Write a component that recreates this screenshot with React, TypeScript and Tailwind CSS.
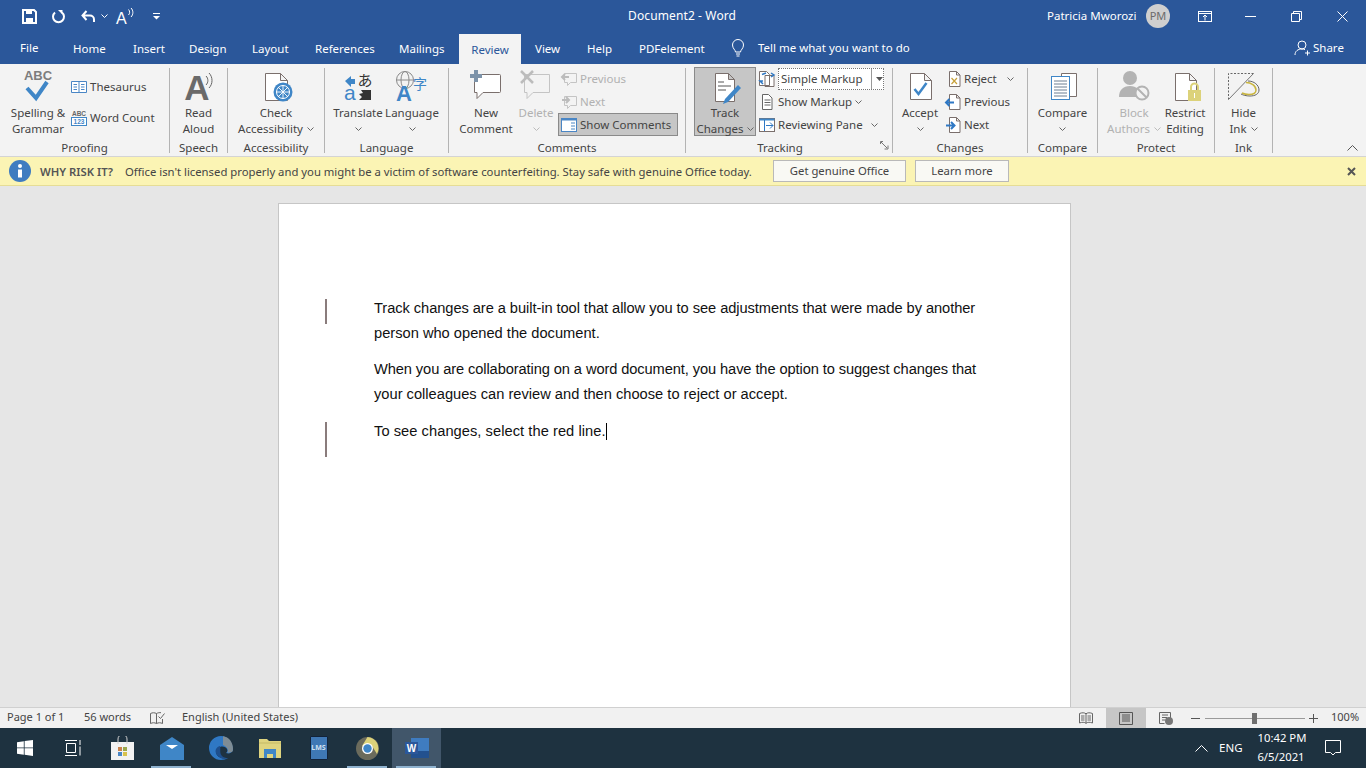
import React from "react";

const Chev = ({ c = "#666" }: { c?: string }) => (
  <svg width="7" height="4" viewBox="0 0 7 4" className="inline-block shrink-0"><path d="M.5.5 3.5 3.5 6.5.5" fill="none" stroke={c} /></svg>
);

const I = ({ children, w = 40 }: { children: React.ReactNode; w?: number }) => (
  <svg width={w} height="38" viewBox={`0 0 ${w} 38`} className="shrink-0 overflow-visible">{children}</svg>
);

const page = (x: number, y: number, w: number, h: number, s = "#7a6f6c") => (
  <path d={`M${x + .5} ${y + .5}h${w - 7}l7 7v${h - 7}h-${w}z M${x + w - 7 + .5} ${y + .5}v7h7`} fill="#fff" stroke={s} />
);

const Big = ({ icon, lines, w, chev, off, last }: { icon: React.ReactNode; lines: string[]; w: number; chev?: boolean; off?: boolean; last?: boolean }) => (
  <div className={`flex flex-col items-center shrink-0 ${off ? "text-[#b1b1b1]" : "text-[#444]"}`} style={{ width: w }}>
    <div className="h-[38px] flex justify-center">{icon}</div>
    {lines.map((l, i) => (
      <div key={l} className="h-[16px] leading-[16px] whitespace-nowrap flex items-center gap-[4px]">
        {l}
        {chev && !last && i === lines.length - 1 ? <Chev c={off ? "#bbb" : "#666"} /> : null}
      </div>
    ))}
    {last ? <div className="h-[16px] flex items-center"><Chev c={off ? "#bbb" : "#666"} /></div> : null}
  </div>
);

const Row = ({ icon, text, off, chev, gap = 3 }: { icon: React.ReactNode; text: string; off?: boolean; chev?: number; gap?: number }) => (
  <div className={`h-[23px] flex items-center whitespace-nowrap pl-[3px] ${off ? "text-[#b1b1b1]" : "text-[#444]"}`}>
    <div className="w-[16px] h-[16px] flex items-center justify-center shrink-0" style={{ marginRight: gap }}>{icon}</div>
    {text}
    {chev !== undefined ? <span className="flex" style={{ marginLeft: chev }}><Chev /></span> : null}
  </div>
);

const Sep = () => <div className="w-px h-[85px] mt-[4px] bg-[#b3b3b3] shrink-0" />;

const Group = ({ w, label, children, cls = "", labelCls = "" }: { w: number; label: string; children: React.ReactNode; cls?: string; labelCls?: string }) => (
  <div className="flex flex-col shrink-0" style={{ width: w }}>
    <div className={`h-[73px] mt-[3px] flex ${cls}`}>{children}</div>
    <div className={`h-[16px] leading-[16px] text-center text-[#444] whitespace-nowrap ${labelCls}`}>{label}</div>
  </div>
);

const S16 = ({ children }: { children: React.ReactNode }) => <svg width="16" height="16" viewBox="0 0 16 16" className="overflow-visible">{children}</svg>;

const Bubble = ({ c, arrow, dir }: { c: string; arrow: string; dir: number }) => (
  <S16>
    <path d="M3.5 2.5h12v9h-6l-3 3v-3h-3z" fill="#f3f3f3" stroke={c} />
    <path d={dir > 0 ? "M1 6h7M5 3l3 3-3 3" : "M8 6H1M4 3 1 6l3 3"} fill="none" stroke={arrow} strokeWidth="2" />
  </S16>
);

const PageArrow = ({ dir }: { dir: number }) => (
  <S16>
    <path d="M3.500.5h7l3.500 3.500v11.500h-10.500zM10.500.5v3.500h3.500" fill="#fff" stroke="#7a6f6c" />
    <path d={dir > 0 ? "M0 8.500h8M5 5l3.500 3.500L5 12" : "M8 8.500H0M3.500 5 0 8.500 3.500 12"} fill="none" stroke="#2f78c4" strokeWidth="2" />
  </S16>
);

const TabItem = ({ t, w, top = true }: { t: string; w: number; top?: boolean }) => (
  <div className={`shrink-0 whitespace-nowrap text-white ${top ? "pt-[2px]" : ""}`} style={{ width: w }}>{t}</div>
);

const Slot = ({ children, bar, active }: { children: React.ReactNode; bar?: boolean; active?: boolean }) => (
  <div className={`relative w-[49px] h-[40px] flex items-center justify-center shrink-0 ${active ? "bg-[#41566a]" : ""}`}>
    {children}
    {bar ? <div className="absolute bottom-0 left-[4px] right-[5px] h-[2px] bg-[#8fb2cf]" /> : null}
  </div>
);

export default function App() {
  return (
    <div className="w-[1366px] h-[768px] overflow-hidden flex flex-col font-['Noto_Sans',sans-serif] text-[11.5px] bg-[#e6e6e6]">
      {/* Title bar */}
      <div className="h-[32px] bg-[#2b579a] flex items-center text-white shrink-0">
        <div className="flex items-center pl-[22px] w-[200px] shrink-0">
          <svg width="15" height="15" viewBox="0 0 15 15" className="mr-[14px]"><path d="M1 1h11l2 2v11H1z" fill="none" stroke="#fff" strokeWidth="2" /><rect x="4" y="1" width="6" height="4" fill="#fff" /><rect x="4" y="9" width="7" height="5" fill="#fff" /></svg>
          <svg width="15" height="15" viewBox="0 0 15 15" className="mr-[15px]"><path d="M4 3.500a5.500 5.500 0 1 0 7 0" fill="none" stroke="#fff" strokeWidth="2" /><path d="M3 1h4.500v4.500z" fill="#fff" transform="translate(4 0)" /></svg>
          <svg width="15" height="13" viewBox="0 0 15 13" className="mr-[5px]"><path d="M1.500 5.500H9a4 4 0 0 1 4 4v2.500M5.500 1 1.500 5.500 5.500 10" fill="none" stroke="#fff" strokeWidth="2" /></svg>
          <Chev c="#fff" />
          <svg width="20" height="17" viewBox="0 0 20 17" className="ml-[8px] overflow-visible"><text x="0" y="16" fontSize="16" fill="#fff" fontFamily="'Liberation Sans',sans-serif">A</text><path d="M12.500 1.500c1.500 1.500 1.500 4 0 5.500M15 0c2.500 2.500 2.500 6.500 0 9" fill="none" stroke="#fff" /></svg>
          <svg width="7" height="7" viewBox="0 0 7 7" className="ml-[17px]"><path d="M0 .5h7" stroke="#fff" /><path d="M0 3h7L3.500 6.500z" fill="#fff" /></svg>
        </div>
        <div className="ml-[428px] w-[200px] text-[12px] whitespace-nowrap tracking-[0.12px]">Document2 - Word</div>
        <div className="ml-[219px] w-[99px] whitespace-nowrap text-[11.5px]">Patricia Mworozi</div>
        <div className="w-[24px] h-[24px] rounded-full bg-[#cfcfcf] text-[#6b6b6b] text-[11px] flex items-center justify-center shrink-0">PM</div>
        <svg width="14" height="11" viewBox="0 0 14 11" className="ml-[28px]"><rect x=".5" y=".5" width="13" height="10" fill="none" stroke="#fff" /><path d="M.5 2.500h13M7 9.500V4.500M5 6l2-2 2 2" fill="none" stroke="#fff" /></svg>
        <svg width="11" height="1" viewBox="0 0 11 1" className="ml-[33px]"><path d="M0 .5h11" stroke="#fff" /></svg>
        <svg width="11" height="11" viewBox="0 0 11 11" className="ml-[35px]"><path d="M.5 2.500h8v8h-8zM2.500 2.500v-2h8v8h-2" fill="none" stroke="#fff" /></svg>
        <svg width="11" height="11" viewBox="0 0 11 11" className="ml-[35px]"><path d="M.5.5l10 10M10.500.5l-10 10" stroke="#fff" /></svg>
      </div>

      {/* Tabs */}
      <div className="h-[32px] bg-[#2b579a] flex items-end shrink-0">
        <div className="flex items-center h-[32px] pl-[20px]">
          <TabItem t="File" w={53} top={false} />
          <TabItem t="Home" w={60} />
          <TabItem t="Insert" w={56} />
          <TabItem t="Design" w={63} />
          <TabItem t="Layout" w={63} />
          <TabItem t="References" w={84} />
          <TabItem t="Mailings" w={60} />
        </div>
        <div className="w-[62px] h-[30px] bg-[#f3f3f3] text-[#2b579a] flex items-center justify-center shrink-0 pt-[1px]">Review</div>
        <div className="flex items-center h-[32px] pl-[14px]">
          <TabItem t="View" w={52} />
          <TabItem t="Help" w={52} />
          <TabItem t="PDFelement" w={92} />
          <svg width="16" height="18" viewBox="0 0 16 18" className="shrink-0 mr-[12px] -ml-[1px]"><path d="M5.500 13c0-2-3-3.500-3-7a5.500 5.500 0 0 1 11 0c0 3.500-3 5-3 7zM6 15h4M6.500 17h3" fill="none" stroke="#fff" /></svg>
          <div className="text-white whitespace-nowrap w-[536px]">Tell me what you want to do</div>
          <svg width="16" height="16" viewBox="0 0 16 16" className="shrink-0 mr-[3px]"><circle cx="8" cy="5" r="4" fill="none" stroke="#fff" /><path d="M1 15c0-4 3-6 7-6 1 0 2 .2 3 .6M11 13h5M13.500 10.500v5" fill="none" stroke="#fff" /></svg>
          <div className="text-white">Share</div>
        </div>
      </div>

      {/* Ribbon */}
      <div className="relative h-[93px] bg-[#f3f3f3] flex border-b border-[#d4d4d4] shrink-0">
        <Group w={169} label="Proofing" cls="pl-[5px]">
          <Big w={66} lines={["Spelling &", "Grammar"]} icon={<I><text x="20" y="13" textAnchor="middle" fontSize="13" fontWeight="700" fill="#7d7d7d" fontFamily="'Liberation Sans',sans-serif">ABC</text><path d="M9 21l9 10L29 15" fill="none" stroke="#3f86c7" strokeWidth="4" /></I>} />
          <div className="-ml-[3px] mt-[8px] flex flex-col gap-[8px]">
            <Row text="Thesaurus" icon={<S16><path d="M.5 2.500h15v11H.5zM8 2.500v11M2.500 5.500h3.500M2.500 8h3.500M2.500 10.500h3.500M10 5.500h3.500M10 8h3.500M10 10.500h3.500" fill="#fff" stroke="#4a86c5" /></S16>} />
            <Row text="Word Count" gap={3} icon={<svg width="16" height="16" viewBox="0 0 16 16"><text x="8" y="6" textAnchor="middle" fontSize="6.500" fontWeight="700" fill="#666" fontFamily="'Liberation Sans',sans-serif">ABC</text><rect x=".5" y="7.500" width="15" height="8" fill="#fff" stroke="#3f86c7" /><text x="8" y="14" textAnchor="middle" fontSize="6.500" fontWeight="700" fill="#3f86c7" fontFamily="'Liberation Sans',sans-serif">123</text></svg>} />
          </div>
        </Group>
        <Sep />
        <Group w={57} label="Speech">
          <Big w={57} lines={["Read", "Aloud"]} icon={<I><text x="18" y="33" textAnchor="middle" fontSize="35" fontWeight="700" fill="#6a6a6a" fontFamily="'Liberation Sans',sans-serif">A</text><path d="M27 9c2.500 2.500 2.500 6.500 0 9M30 6c4 4 4 11 0 15" fill="none" stroke="#666" /></I>} />
        </Group>
        <Sep />
        <Group w={96} label="Accessibility">
          <Big w={96} chev lines={["Check", "Accessibility"]} icon={<I>{page(9, 6, 22, 27)}<circle cx="27" cy="25" r="9.500" fill="#3f86c7" /><circle cx="27" cy="25" r="6.500" fill="none" stroke="#fff" /><path d="M27 18v14M20 25h14M22 20l10 10M32 20 22 30" stroke="#fff" strokeWidth=".9" /></I>} />
        </Group>
        <Sep />
        <Group w={123} label="Language" cls="pl-[6px]">
          <Big w={54} last lines={["Translate"]} icon={<I><path d="M7 14l6-5v3h4v5h-4v3z" fill="#3f86c7" /><text x="6" y="33" fontSize="21" fontWeight="400" fill="#3f86c7" fontFamily="'Liberation Sans',sans-serif">a</text><text x="27" y="19" textAnchor="middle" fontSize="15" fill="#333" fontFamily="'Noto Sans CJK JP',sans-serif">あ</text><path d="M33 23v10H21l3-3-3-3 4-1-2-3z" fill="#333" /></I>} />
          <Big w={54} last lines={["Language"]} icon={<I w={42}><circle cx="14" cy="13" r="8.500" fill="none" stroke="#8a8a8a" /><ellipse cx="14" cy="13" rx="4" ry="8.500" fill="none" stroke="#8a8a8a" /><path d="M5.500 13h17" stroke="#8a8a8a" /><text x="13" y="34" textAnchor="middle" fontSize="22" fontWeight="700" fill="#3f86c7" fontFamily="'Liberation Sans',sans-serif">A</text><text x="29" y="22" textAnchor="middle" fontSize="14" fill="#3f86c7" fontFamily="'Noto Sans CJK SC',sans-serif">字</text></I>} />
        </Group>
        <Sep />
        <Group w={236} label="Comments" cls="pl-[9px]">
          <Big w={56} lines={["New", "Comment"]} icon={<I><path d="M8.500 7.500h25a1 1 0 0 1 1 1v16a1 1 0 0 1-1 1H17l-6 6v-6H8.500z" fill="#fff" stroke="#7a6f6c" /><path d="M8 3h4v4h4v4h-4v4H8v-4H4V7h4z" fill="#7d93a9" /></I>} />
          <Big w={44} off last lines={["Delete"]} icon={<I><path d="M8.500 7.500h25v18H17l-6 6v-6H8.500z" fill="#f3f3f3" stroke="#c4c4c4" /><path d="M5 4l12 12M17 4 5 16" stroke="#bcbcbc" strokeWidth="2.500" /></I>} />
          <div className="flex flex-col w-[122px]">
            <Row off gap={3} text="Previous" icon={<Bubble c="#c4c4c4" arrow="#bcbcbc" dir={-1} />} />
            <Row off gap={3} text="Next" icon={<Bubble c="#c4c4c4" arrow="#bcbcbc" dir={1} />} />
            <div className="h-[23px] w-[120px] bg-[#c6c6c6] border border-[#8a8a8a] flex items-center whitespace-nowrap text-[#444] pl-[2px]">
              <svg width="16" height="14" viewBox="0 0 16 14" className="mr-[3px] shrink-0"><rect x=".5" y=".5" width="15" height="13" fill="#fff" stroke="#4a86c5" /><path d="M.5 1.500h15" stroke="#4a86c5" strokeWidth="2" /><path d="M10 5h4M10 8h4M10 11h4" stroke="#4a86c5" /></svg>
              Show Comments
            </div>
          </div>
        </Group>
        <Sep />
        <Group w={206} label="Tracking" cls="pl-[8px]" labelCls="w-[188px]">
          <div className="w-[62px] h-[69px] bg-[#c6c6c6] border border-[#8a8a8a] flex flex-col items-center text-[#444] shrink-0">
            <div className="h-[37px] flex justify-center"><I><path d="M10.500 5.500h13l6 6v22h-19z M23.500 5.500v6h6" fill="#fff" stroke="#7a6f6c" /><path d="M13 14h6M13 18h13M13 22h8" stroke="#555" /><path d="M33 17l-13 14-2 5 5-2 13-14z" fill="#3f86c7" /></I></div>
            <div className="h-[16px] leading-[16px]">Track</div>
            <div className="h-[16px] leading-[16px] flex items-center gap-[3px] whitespace-nowrap">Changes <Chev /></div>
          </div>
          <div className="flex flex-col w-[130px]">
            <div className="h-[23px] flex items-center text-[#444]">
              <div className="w-[16px] h-[16px] ml-[3px] mr-[3px] shrink-0"><S16><path d="M.5.5h7l3 3v11h-10zM6 4.500h9v11H6z" fill="#fff" stroke="#7a6f6c" /><path d="M7 2l-4 1.500M12 2l3 2-3 2M4 10H1l3 3" fill="none" stroke="#2f78c4" strokeWidth="1.500" /></S16></div>
              <div className="w-[106px] h-[22px] bg-white border border-dotted border-[#777] flex items-center pl-[2px] whitespace-nowrap">
                <span className="w-[91px]">Simple Markup</span>
                <span className="h-[20px] border-l border-[#999] pl-[4px] flex items-center"><svg width="7" height="4" viewBox="0 0 7 4"><path d="M0 0h7L3.500 4z" fill="#555" /></svg></span>
              </div>
            </div>
            <Row text="Show Markup" gap={3} chev={3} icon={<S16><path d="M3.500.5h6l3.500 3.500v11.500h-9.500zM5.500 6h6M5.500 8.500h6M5.500 11h6" fill="#fff" stroke="#666" /></S16>} />
            <Row text="Reviewing Pane" gap={3} chev={8} icon={<S16><rect x=".5" y="1.500" width="15" height="13" fill="#fff" stroke="#7a6f6c" /><path d="M.5 2.500h15" stroke="#3f86c7" strokeWidth="2" /><path d="M5.500 3v11M7 8.500h7M11 5.500l3 3-3 3" fill="none" stroke="#2f78c4" /></S16>} />
          </div>
          <div className="relative w-0">
            <svg width="9" height="9" viewBox="0 0 9 9" className="absolute left-[-6px] top-[74px]"><path d="M.5 3V.5H3M1 1l6 6M4.500 8H8V4.500" fill="none" stroke="#777" /></svg>
          </div>
        </Group>
        <Sep />
        <Group w={134} label="Changes" cls="pl-[6px]">
          <Big w={42} last lines={["Accept"]} icon={<I w={42}>{page(11, 6, 21, 26)}<path d="M15.500 22l4 5 8-11" fill="none" stroke="#3f86c7" strokeWidth="2.500" /></I>} />
          <div className="flex flex-col ml-[2px]">
            <Row text="Reject" gap={2} chev={10} icon={<S16><path d="M3.500.5h7l3.500 3.500v11.500h-10.500zM10.500.5v3.500h3.500" fill="#fff" stroke="#7a6f6c" /><path d="M5.500 7l5.500 6M11 7l-5.500 6" stroke="#c7a13c" strokeWidth="1.200" /></S16>} />
            <Row text="Previous" gap={2} icon={<PageArrow dir={-1} />} />
            <Row text="Next" gap={2} icon={<PageArrow dir={1} />} />
          </div>
        </Group>
        <Sep />
        <Group w={69} label="Compare">
          <Big w={69} last lines={["Compare"]} icon={<I><path d="M18.500 6.500h15v23h-15z" fill="#fff" stroke="#7a6f6c" /><rect x="8.500" y="9.500" width="18" height="23" fill="#fff" stroke="#3f86c7" /><path d="M11 14h13M11 17h13M11 20h13M11 23h13M11 26h13M11 29h13" stroke="#6d7f92" /></I>} />
        </Group>
        <Sep />
        <Group w={116} label="Protect" cls="pl-[8px]">
          <Big w={56} off chev lines={["Block", "Authors"]} icon={<I><circle cx="16" cy="11" r="7" fill="#b3b3b3" /><path d="M5 30c0-7 4-11 11-11 3 0 6 1 8 3v8z" fill="#b3b3b3" /><circle cx="28" cy="26" r="6.500" fill="#f3f3f3" stroke="#b3b3b3" strokeWidth="2" /><path d="M23.500 21.500l9 9" stroke="#b3b3b3" strokeWidth="2" /></I>} />
          <Big w={46} lines={["Restrict", "Editing"]} icon={<I>{page(10, 6, 21, 27)}<path d="M26 23v-3a3.500 3.500 0 0 1 7 0v3" fill="none" stroke="#dcd27a" strokeWidth="2" /><rect x="23" y="23" width="13" height="11" fill="#dcd27a" /><path d="M29.500 26v5" stroke="#fff" /></I>} />
        </Group>
        <Sep />
        <Group w={57} label="Ink">
          <Big w={57} chev lines={["Hide", "Ink"]} icon={<I><path d="M4.500 32.500v-26h25" fill="none" stroke="#666" strokeDasharray="2 1.500" /><path d="M4.500 32.500 29.500 6.500" stroke="#777" /><path d="M24 14c6 0 11 4 11 9 0 4-4 6-9 6-4 0-7-1-9-2" fill="none" stroke="#666" /><path d="M22 15.500c5 0 10 3 10 7.500 0 3-3 4.500-7 4.500-3 0-5-.5-7-1.500" fill="none" stroke="#c9b53f" strokeWidth="1.500" /></I>} />
        </Group>
        <Sep />
        <svg width="11" height="6" viewBox="0 0 11 6" className="absolute left-[1347px] top-[81px]"><path d="M.5 5.500l5-5 5 5" fill="none" stroke="#555" /></svg>
      </div>

      {/* Message bar */}
      <div className="h-[29px] bg-[#fbf4b4] border-b border-[#e6dd96] flex items-center shrink-0 text-[#444] text-[11.3px]">
        <svg width="22" height="22" viewBox="0 0 22 22" className="ml-[9px] shrink-0"><circle cx="11" cy="11" r="11" fill="#3f7cc0" /><circle cx="11" cy="6" r="2" fill="#fff" /><path d="M9 9.500h4v8H9z" fill="#fff" /></svg>
        <div className="ml-[9px] w-[85px] font-semibold whitespace-nowrap text-[#555] pt-[2px]">WHY RISK IT?</div>
        <div className="w-[648px] whitespace-nowrap pt-[2px]">Office isn't licensed properly and you might be a victim of software counterfeiting. Stay safe with genuine Office today.</div>
        <div className="w-[133px] h-[22px] bg-[#f9f9f4] border border-[#b9b9b9] flex items-center justify-center whitespace-nowrap shrink-0">Get genuine Office</div>
        <div className="ml-[9px] w-[94px] h-[22px] bg-[#f9f9f4] border border-[#b9b9b9] flex items-center justify-center whitespace-nowrap shrink-0">Learn more</div>
        <svg width="9" height="9" viewBox="0 0 9 9" className="ml-[338px] shrink-0"><path d="M1 1l7 7M8 1 1 8" stroke="#555" strokeWidth="2" /></svg>
      </div>

      {/* Canvas */}
      <div className="flex-1 min-h-0 overflow-hidden bg-[#e6e6e6] pt-[17px] pl-[278px]">
        <div className="relative w-[793px] h-[600px] bg-white border border-[#c6c6c6] pt-[91.5px] pl-[95px] font-['Liberation_Sans',sans-serif] text-[14.67px] text-[#111] leading-[25.5px]">
          <div className="absolute left-[46px] top-[95px] w-[2px] h-[25px] bg-[#8a7c7c]" />
          <div className="absolute left-[46px] top-[218px] w-[2px] h-[35px] bg-[#8a7c7c]" />
          <p className="whitespace-nowrap">
            <span className="block tracking-[-0.065px]">Track changes are a built-in tool that allow you to see adjustments that were made by another</span>
            <span className="block">person who opened the document.</span>
          </p>
          <p className="whitespace-nowrap mt-[10px]">
            <span className="block tracking-[-0.1px]">When you are collaborating on a word document, you have the option to suggest changes that</span>
            <span className="block">your colleagues can review and then choose to reject or accept.</span>
          </p>
          <p className="mt-[11px] flex items-center whitespace-nowrap tracking-[0.05px]">To see changes, select the red line.<span className="inline-block w-px h-[17px] bg-black" /></p>
        </div>
      </div>

      {/* Status bar */}
      <div className="h-[21px] bg-[#f1f1f1] border-t border-[#d0d0d0] flex items-center text-[#444] text-[11px] shrink-0 relative">
        <div className="ml-[7px] w-[77px] whitespace-nowrap pb-[2px]">Page 1 of 1</div>
        <div className="w-[66px] whitespace-nowrap pb-[2px]">56 words</div>
        <svg width="15" height="13" viewBox="0 0 15 13" className="shrink-0"><path d="M.5 1.500c2-1 4-1 6 0v10c-2-1-4-1-6 0zM6.500 1.500c1.500-.8 3-1 4.500-.8M6.500 11.500c2-1 4-1 6 0V7" fill="none" stroke="#666" /><path d="M8.500 4.500l2 2 4-5" fill="none" stroke="#666" /></svg>
        <div className="ml-[17px] w-[897px] whitespace-nowrap pb-[2px]">English (United States)</div>
        <svg width="14" height="12" viewBox="0 0 14 12" className="shrink-0"><path d="M.5 1.500c2.500-1 5-1 6.500.3 1.500-1.300 4-1.300 6.500-.3v9.500c-2.500-1-5-1-6.500.3-1.500-1.300-4-1.300-6.500-.3zM7 1.800v9.500M2 4h3.500M2 6h3.500M2 8h3.500M8.500 4H12M8.500 6H12M8.500 8H12" fill="none" stroke="#666" /></svg>
        <div className="ml-[13px] w-[40px] h-[20px] bg-[#c6c6c6] flex items-center justify-center shrink-0"><svg width="14" height="13" viewBox="0 0 14 13"><path d="M.5.500h13v12H.5zM3 3h8M3 5h8M3 7h8M3 9h8" fill="none" stroke="#555" /></svg></div>
        <svg width="14" height="13" viewBox="0 0 14 13" className="ml-[13px] shrink-0"><path d="M.5.500h11v7M.5.500v11h5M3 3h6M3 5.500h5M3 8h3" fill="none" stroke="#666" /><circle cx="10" cy="9" r="4" fill="#777" /></svg>
        <div className="ml-[18px] w-[9px] h-px bg-[#555] shrink-0" />
        <div className="relative ml-[5px] w-[100px] h-px bg-[#9a9a9a] shrink-0"><div className="absolute left-[47px] -top-[5px] w-[5px] h-[11px] bg-[#6f6f6f]" /></div>
        <svg width="9" height="9" viewBox="0 0 9 9" className="ml-[4px] shrink-0"><path d="M0 4.500h9M4.500 0v9" stroke="#555" /></svg>
        <div className="ml-[13px] whitespace-nowrap pb-[2px]">100%</div>
      </div>

      {/* Taskbar */}
      <div className="h-[40px] bg-[#1e3240] flex items-center shrink-0 text-white">
        <Slot><svg width="16" height="16" viewBox="0 0 16 16"><path d="M0 2.200 6.800 1.200v6.300H0zM7.600 1.100 16 0v7.500H7.600zM0 8.300h6.800v6.400L0 13.800zM7.600 8.300H16V16l-8.400-1.200z" fill="#fff" /></svg></Slot>
        <Slot><svg width="17" height="16" viewBox="0 0 17 16"><path d="M0 .5h12M0 15.500h12M1.500 3.500h9v9h-9zM15 0v5M15 6.500v9" fill="none" stroke="#fff" /></svg></Slot>
        <Slot><svg width="23" height="24" viewBox="0 0 23 24"><path d="M0 6h23v18H0z" fill="#f2f2f2" /><path d="M7 8V3a4 4 0 0 1 9 0v5" fill="none" stroke="#d0d0d0" /><rect x="7" y="11" width="4" height="4" fill="#c9814a" /><rect x="12" y="11" width="4" height="4" fill="#9aa84c" /><rect x="7" y="16" width="4" height="4" fill="#4a86c5" /><rect x="12" y="16" width="4" height="4" fill="#d7c24e" /></svg></Slot>
        <Slot bar><svg width="24" height="23" viewBox="0 0 24 23"><path d="M0 8 12 0l12 8v15H0z" fill="#3f86c7" /><path d="M6 8h12l-6 4z" fill="#fff" /></svg></Slot>
        <Slot><svg width="24" height="24" viewBox="0 0 24 24"><path d="M12 0A12 12 0 0 0 12 24c3 0 5-1 7-2-5 1-9 0-11-3-2-3-1-7 3-8 3-1 6 0 7 2 1 2 0 3-1 4 3 1 6 0 7-3 0-7-5-14-12-14z" fill="#2f78c4" /><path d="M14 .2C20 1 24 6 24 13c0 1-.2 2-.6 2.600-1 1-3 1.400-5.400 1 1-1 1.500-2.500 0-4.600-1-1.500-2.500-2.500-4-3z" fill="#7e8c95" /><path d="M8 19c-3-4-1-8 3-9 1 3-1 7 2 10 1.500 1.500 3.500 2 6 2-4 1.500-8.500.5-11-3z" fill="#1e4f8d" /></svg></Slot>
        <Slot><svg width="22" height="20" viewBox="0 0 22 20"><path d="M0 1h8l2 2h12v17H0z" fill="#dfd47f" /><path d="M0 5h22" stroke="#c4b966" /><path d="M5 11h12v9h-3v-4H8v4H5z" fill="#3f86c7" /></svg></Slot>
        <Slot><div className="w-[18px] h-[24px] bg-[#3f78b5] rounded-[1px] border border-[#12233a] flex items-center justify-center text-[7px] font-bold text-[#cfe0ee]">LMS</div></Slot>
        <Slot bar><svg width="23" height="23" viewBox="0 0 23 23"><circle cx="11.500" cy="11.500" r="11.500" fill="#6b6b5c" /><path d="M11.500 0A11.500 11.500 0 0 1 21 17L16 9H6z" fill="#dcd27a" /><circle cx="11.500" cy="11.500" r="5.500" fill="#fff" /><circle cx="11.500" cy="11.500" r="4.200" fill="#3f86c7" /></svg></Slot>
        <Slot bar active><svg width="24" height="22" viewBox="0 0 24 22"><rect x="6" y="1" width="18" height="20" fill="#3f7cc0" /><rect x="6" y="14" width="18" height="7" fill="#23518f" /><rect x="0" y="5" width="13" height="12" fill="#2b579a" /><text x="6.500" y="14.500" textAnchor="middle" fontSize="10" fontWeight="700" fill="#fff" fontFamily="'Liberation Sans',sans-serif">W</text></svg></Slot>
        <div className="w-[754px] shrink-0" />
        <svg width="13" height="7" viewBox="0 0 13 7" className="shrink-0"><path d="M.5 6.500l6-6 6 6" fill="none" stroke="#fff" /></svg>
        <div className="ml-[11px] w-[32px] text-[11.5px] whitespace-nowrap">ENG</div>
        <div className="w-[62px] text-[11.3px] leading-[19px] whitespace-nowrap text-center pb-[2px]">
          <div>10:42 PM</div>
          <div className="-ml-[2px]">6/5/2021</div>
        </div>
        <svg width="16" height="16" viewBox="0 0 16 16" className="ml-[12px] shrink-0"><path d="M.5.500h15v12h-5L8 15l-2.500-2.500h-5z" fill="none" stroke="#fff" /></svg>
      </div>
    </div>
  );
}
